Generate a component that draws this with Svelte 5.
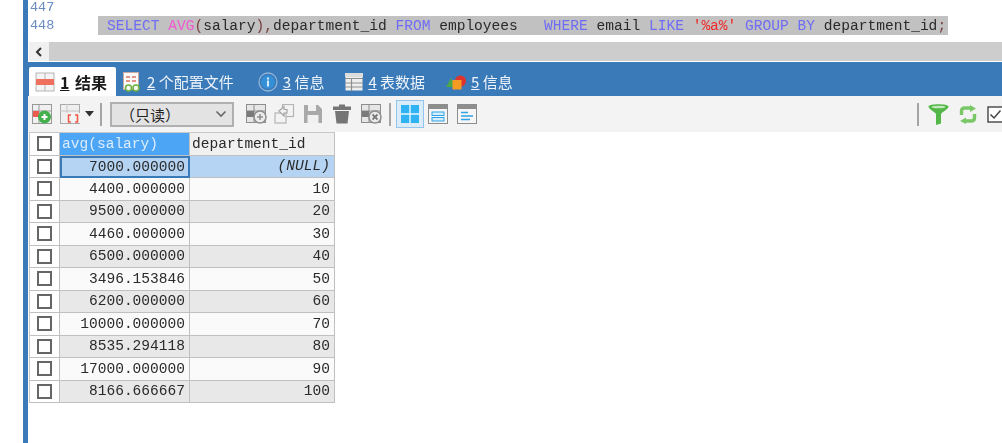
<script lang="ts">
	// one row per result; null shows as (NULL) in the grid
	const rows = [
		{ avg: '7000.000000', dept: null },
		{ avg: '4400.000000', dept: 10 },
		{ avg: '9500.000000', dept: 20 },
		{ avg: '4460.000000', dept: 30 },
		{ avg: '6500.000000', dept: 40 },
		{ avg: '3496.153846', dept: 50 },
		{ avg: '6200.000000', dept: 60 },
		{ avg: '10000.000000', dept: 70 },
		{ avg: '8535.294118', dept: 80 },
		{ avg: '17000.000000', dept: 90 },
		{ avg: '8166.666667', dept: 100 }
	];
</script>

<div class="window">
	<section class="editor">
		<div class="line first"><span class="num">447</span></div>
		<div class="line">
			<span class="num">448</span>
			<code class="sql"><span class="kw">SELECT</span> <span class="fn">AVG</span><span class="paren">(</span>salary<span class="paren">)</span><span class="paren">,</span>department_id <span class="kw">FROM</span> employees{'   '}<span class="kw">WHERE</span> email <span class="kw">LIKE</span> <span class="str">'%a%'</span> <span class="kw">GROUP BY</span> department_id<span class="paren">;</span></code>
		</div>
	</section>

	<div class="hscroll">
		<div class="scroll-btn">
			<svg width="10" height="10" viewBox="0 0 10 10"><path d="M7 1 L3 5 L7 9" fill="none" stroke="#333" stroke-width="2" /></svg>
		</div>
	</div>

	<nav class="tabs">
		<div class="tab active">
			<svg width="20" height="20" viewBox="0 0 20 20">
				<rect x="1" y="1" width="18" height="18" fill="#f4f4f4" stroke="#b5b5b5" />
				<rect x="1" y="7" width="18" height="6" fill="#f0705f" />
				<path d="M10 1V7M10 13V19" stroke="#b5b5b5" />
			</svg>
			<span class="label"><u>1</u> 结果</span>
		</div>
		<div class="tab second">
			<svg width="20" height="22" viewBox="0 0 20 22">
				<rect x="1.5" y="1.5" width="15" height="17" fill="#fbfbfb" stroke="#c9a9a0" />
				<path d="M4 6H8M10 6H14M4 10H8M10 10H14" stroke="#e07060" stroke-width="1.5" />
				<circle cx="6.5" cy="17" r="3" fill="#f5f5f5" stroke="#6cb33f" stroke-width="1.5" />
				<circle cx="14" cy="17" r="3" fill="#f5f5f5" stroke="#6cb33f" stroke-width="1.5" />
			</svg>
			<span class="label"><u>2</u> 个配置文件</span>
		</div>
		<div class="tab">
			<svg width="20" height="20" viewBox="0 0 20 20">
				<circle cx="10" cy="10" r="9" fill="#3a7ab8" stroke="#8fb4d8" stroke-width="1.3" />
				<circle cx="10" cy="10" r="6.8" fill="#3590d8" />
				<rect x="9" y="8.5" width="2" height="6" fill="#d8ecfa" />
				<rect x="9" y="5.5" width="2" height="2" fill="#d8ecfa" />
			</svg>
			<span class="label"><u>3</u> 信息</span>
		</div>
		<div class="tab fourth">
			<svg width="18" height="18" viewBox="0 0 18 18">
				<rect x="0.5" y="0.5" width="17" height="17" fill="#eeeeee" />
				<path d="M0 5.5H18M0 10H18M0 14H18M6.5 5V18" stroke="#8f8f8f" stroke-width="1.2" />
				<rect x="0" y="0" width="18" height="4" fill="#dddddd" />
			</svg>
			<span class="label"><u>4</u> 表数据</span>
		</div>
		<div class="tab fifth">
			<svg width="20" height="20" viewBox="0 0 20 20">
				<circle cx="14.5" cy="9" r="5.5" fill="#e0332c" />
				<path d="M0 15 L5 6 L10 15Z" fill="#4aa84a" />
				<rect x="6.5" y="8" width="9" height="9.5" fill="#f59a23" />
			</svg>
			<span class="label"><u>5</u> 信息</span>
		</div>
	</nav>

	<div class="toolbar">
		<svg class="ic add-row" width="20" height="20" viewBox="0 0 20 20">
			<rect x="0.5" y="0.5" width="19" height="19" fill="#f0f0f0" stroke="#999" />
			<path d="M0 7H19M7 0V19" stroke="#999" />
			<rect x="1" y="7" width="6" height="6" fill="#ee5b4c" />
			<circle cx="12.5" cy="13" r="6.5" fill="#44b04c" />
			<path d="M9.5 13H15.5M12.5 10V16" stroke="#fff" stroke-width="2" />
		</svg>
		<svg class="ic dup-row" width="20" height="20" viewBox="0 0 20 20">
			<rect x="0.5" y="0.5" width="19" height="19" fill="#efefef" stroke="#aaa" />
			<path d="M0 7H19M7 0V19" stroke="#c5c5c5" />
			<rect x="6" y="9" width="14" height="10" fill="#f4f4f4" />
			<path d="M11 11H8.5V18H11M15 11H17.5V18H15" fill="none" stroke="#ef5a4a" stroke-width="1.6" />
		</svg>
		<svg class="caret" width="9" height="6" viewBox="0 0 9 6"><path d="M0 0H9L4.5 5.5Z" fill="#333" /></svg>
		<span class="sep first-sep"></span>
		<div class="select">
			<span>（只读）</span>
			<svg width="12" height="8" viewBox="0 0 12 8"><path d="M1.5 1.5 L6 6 L10.5 1.5" fill="none" stroke="#666" stroke-width="1.6" /></svg>
		</div>
		<svg class="ic grid-add" width="21" height="20" viewBox="0 0 21 20">
			<rect x="0.5" y="0.5" width="19" height="18" fill="#e6e6e6" stroke="#8d8d8d" />
			<path d="M0 7H19M8 0V19" stroke="#8d8d8d" />
			<rect x="1" y="7" width="7" height="6" fill="#7a7a7a" />
			<circle cx="14" cy="13" r="6" fill="#ececec" stroke="#8d8d8d" stroke-width="1.5" />
			<path d="M11 13H17M14 10V16" stroke="#8d8d8d" stroke-width="1.5" />
		</svg>
		<svg class="ic undo" width="21" height="20" viewBox="0 0 21 20">
			<rect x="8.5" y="0.5" width="11" height="12" fill="#f3f3f3" stroke="#b5b5b5" stroke-width="1.2" />
			<rect x="1" y="9" width="11" height="10" fill="#f3f3f3" stroke="#b5b5b5" stroke-width="1.2" />
			<path d="M5 7 L10 2.5 V5.5 H13 V9 H10 V12Z" fill="#f3f3f3" stroke="#a5a5a5" stroke-width="1.2" />
		</svg>
		<svg class="ic save" width="20" height="20" viewBox="0 0 20 20">
			<path d="M1 1H15L19 5V19H1Z" fill="#a9a9a9" />
			<rect x="5" y="1" width="8" height="6" fill="#f0f0f0" />
			<rect x="4.5" y="11" width="11" height="8" fill="#f0f0f0" />
		</svg>
		<svg class="ic trash" width="20" height="20" viewBox="0 0 20 20">
			<path d="M7 0.5H13V2.5H19V6H1V2.5H7Z" fill="#757575" />
			<path d="M3 7H17L15.5 19.5H4.5Z" fill="#757575" />
		</svg>
		<svg class="ic grid-del" width="21" height="20" viewBox="0 0 21 20">
			<rect x="0.5" y="0.5" width="19" height="18" fill="#e6e6e6" stroke="#8d8d8d" />
			<path d="M0 7H19M8 0V19" stroke="#8d8d8d" />
			<rect x="1" y="7" width="7" height="6" fill="#7a7a7a" />
			<circle cx="14" cy="13" r="6" fill="#ececec" stroke="#8d8d8d" stroke-width="1.5" />
			<path d="M11.5 10.5L16.5 15.5M16.5 10.5L11.5 15.5" stroke="#7a7a7a" stroke-width="1.8" />
		</svg>
		<span class="sep second-sep"></span>
		<div class="view-btn">
			<svg width="18" height="18" viewBox="0 0 18 18">
				<rect width="18" height="18" fill="#2fb3f5" />
				<path d="M9 0V18M0 9H18" stroke="#eaf6fd" stroke-width="1.4" />
			</svg>
		</div>
		<svg class="ic form-view" width="20" height="20" viewBox="0 0 20 20">
			<rect x="0.5" y="0.5" width="19" height="19" fill="#f6f6f6" stroke="#8d8d8d" />
			<rect x="1" y="1" width="18" height="4" fill="#8d8d8d" />
			<rect x="4" y="8" width="12" height="3.5" fill="#d6eefb" stroke="#2fa3e6" stroke-width="1" />
			<rect x="4" y="13.5" width="12" height="3.5" fill="#d6eefb" stroke="#2fa3e6" stroke-width="1" />
		</svg>
		<svg class="ic text-view" width="20" height="20" viewBox="0 0 20 20">
			<rect x="0.5" y="0.5" width="19" height="19" fill="#f6f6f6" stroke="#8d8d8d" />
			<rect x="1" y="1" width="18" height="4" fill="#8d8d8d" />
			<path d="M4 8.5H11M4 12H16M4 15.5H13" stroke="#2fa3e6" stroke-width="1.5" />
		</svg>
		<div class="right-tools">
			<span class="sep"></span>
			<svg class="funnel" width="21" height="21" viewBox="0 0 21 21">
				<path d="M0.5 2.5C0.5 -0.5 20.5 -0.5 20.5 2.5C20.5 5 14 8 13 10V19.5L8 21V10C7 8 0.5 5 0.5 2.5Z" fill="#53b848" />
				<ellipse cx="10.5" cy="3" rx="7" ry="1.3" fill="#c2e8bd" />
			</svg>
			<svg class="refresh" width="18" height="19" viewBox="0 0 18 19">
				<path d="M2.5 10V6C2.5 4 4 3 6 3H12" fill="none" stroke="#7ac767" stroke-width="3.4" />
				<path d="M11 0L17 3.5L11 7Z" fill="#7ac767" />
				<path d="M15.5 9V13C15.5 15 14 16 12 16H6" fill="none" stroke="#7ac767" stroke-width="3.4" />
				<path d="M7 12.5L1 16L7 19Z" fill="#7ac767" />
			</svg>
			<svg class="check" width="17" height="17" viewBox="0 0 17 17">
				<rect x="1" y="1" width="15" height="15" fill="#fff" stroke="#444" stroke-width="1.4" />
				<path d="M3.5 8.5L7 12L13.5 4.5" fill="none" stroke="#444" stroke-width="1.5" />
			</svg>
		</div>
	</div>

	<div class="grid">
		<div class="cell box-cell head"><span class="box"></span></div>
		<div class="cell head selected-head">avg(salary)</div>
		<div class="cell head">department_id</div>
		{#each rows as row, i}
			<div class="cell box-cell"><span class="box"></span></div>
			<div class="cell num-cell" class:current={i === 0} class:alt={i % 2 === 0 && i > 0} class:plain={i % 2 === 1}>{row.avg}</div>
			<div class="cell num-cell" class:current-row={i === 0} class:alt={i % 2 === 0 && i > 0} class:plain={i % 2 === 1}>
				{#if row.dept === null}<em>(NULL)</em>{:else}{row.dept}{/if}
			</div>
		{/each}
	</div>
</div>

<style>
	:global(body) {
		margin: 0;
		background: #fff;
	}
	.window {
		box-sizing: border-box;
		width: 979px;
		height: 443px;
		margin-left: 23px;
		border-left: 5px solid #3a7ab8;
		overflow: hidden;
		font-family: "Liberation Mono", monospace;
		font-size: 14.55px;
		color: #2a2a2a;
		filter: blur(0.4px);
	}
	.editor {
		height: 42px;
		padding-left: 2px;
	}
	.line {
		display: flex;
		align-items: center;
		height: 19px;
		white-space: pre;
	}
	.line.first {
		height: 16px;
	}
	.num {
		width: 68px;
		flex: none;
		color: #6a8cc0;
		font-size: 13.5px;
		line-height: 20px;
	}
	.sql {
		font: inherit;
		font-size: 14.57px;
		background: #c1c1c1;
		height: 19px;
		line-height: 20px;
		padding: 0 2px 0 9px;
	}
	.kw {
		color: #6f6cf5;
	}
	.fn {
		color: #f05ad0;
	}
	.paren {
		color: #7a4040;
	}
	.str {
		color: #f02828;
	}
	.hscroll {
		height: 19px;
		margin-left: 1px;
		background: #cdcdcd;
	}
	.scroll-btn {
		display: flex;
		align-items: center;
		justify-content: center;
		width: 20px;
		height: 19px;
		background: #f0f0f0;
	}
	.tabs {
		display: flex;
		align-items: flex-end;
		box-sizing: border-box;
		height: 34px;
		margin-top: 1px;
		padding-left: 1px;
		background: #3a7ab8;
		color: #eef4fa;
		font-family: "Noto Sans CJK SC", "Liberation Sans", sans-serif;
		font-size: 15px;
	}
	.tab {
		display: flex;
		align-items: center;
		gap: 5px;
		height: 29px;
		padding: 0 10px;
		white-space: pre;
	}
	.tab.active {
		width: 87px;
		box-sizing: border-box;
		padding: 0 0 0 6px;
		background: #fff;
		border-radius: 2px 2px 0 0;
		color: #1a1a1a;
		font-size: 16px;
		font-weight: 700;
		word-spacing: 2px;
	}
	.tab.second {
		padding: 0 14px 0 6px;
	}
	.tab.fourth {
		padding: 0 11px;
	}
	.tab.fifth {
		padding: 0 0 0 10px;
	}
	.toolbar {
		display: flex;
		align-items: center;
		box-sizing: border-box;
		height: 36px;
		padding-left: 4px;
		background: #f3f3f3;
	}
	.ic {
		flex: none;
	}
	.dup-row {
		margin-left: 8px;
	}
	.caret {
		margin-left: 5px;
	}
	.sep {
		width: 2px;
		height: 23px;
		flex: none;
		background: #a5a5a5;
	}
	.first-sep {
		margin: 0 8px 0 6px;
	}
	.select {
		display: flex;
		align-items: center;
		justify-content: space-between;
		box-sizing: border-box;
		width: 124px;
		height: 25px;
		padding: 0 5px 0 8px;
		background: #e3e3e3;
		border: 2px solid #b0b0b0;
		font-family: "Noto Sans CJK SC", sans-serif;
		font-size: 15px;
		color: #222;
	}
	.grid-add {
		margin-left: 12px;
	}
	.undo {
		margin-left: 7px;
	}
	.save {
		margin-left: 8px;
	}
	.trash {
		margin-left: 9px;
	}
	.grid-del {
		margin-left: 9px;
	}
	.second-sep {
		margin: 0 5px 0 7px;
	}
	.view-btn {
		display: flex;
		align-items: center;
		justify-content: center;
		box-sizing: border-box;
		width: 28px;
		height: 28px;
		background: #dcebf8;
		border: 1px solid #90c5ee;
	}
	.form-view {
		margin-left: 4px;
	}
	.text-view {
		margin-left: 9px;
	}
	.right-tools {
		display: flex;
		align-items: center;
		margin-left: auto;
		margin-right: -2px;
	}
	.funnel {
		margin-left: 9px;
	}
	.refresh {
		margin-left: 10px;
	}
	.check {
		margin-left: 10px;
	}
	.grid {
		display: grid;
		grid-template-columns: 30px 130px 145px;
		grid-auto-rows: 22.5px;
		width: 306px;
		margin-left: 1px;
		border-top: 1px solid #c8c8c8;
		border-left: 1px solid #c8c8c8;
		box-sizing: border-box;
	}
	.cell {
		box-sizing: border-box;
		display: flex;
		align-items: center;
		padding: 0 4px 0 2px;
		background: #fff;
		border-right: 1px solid #c0c0c0;
		border-bottom: 1px solid #c0c0c0;
		white-space: pre;
	}
	.head {
		background: #f0f0f0;
	}
	.selected-head {
		background: #4da6f5;
		color: #dcecfb;
	}
	.box-cell {
		justify-content: center;
		padding: 0;
		background: #fff;
	}
	.box {
		box-sizing: border-box;
		width: 15px;
		height: 15px;
		background: #fff;
		border: 2px solid #666;
	}
	.num-cell {
		justify-content: flex-end;
	}
	.plain {
		background: #fafafa;
	}
	.alt {
		background: #e8e8e8;
	}
	.current {
		background: #b5d3f3;
		border: 2px solid #3a7ab8;
		padding-right: 3px;
	}
	.current-row {
		background: #b5d3f3;
	}
	em {
		font-style: italic;
	}
</style>
